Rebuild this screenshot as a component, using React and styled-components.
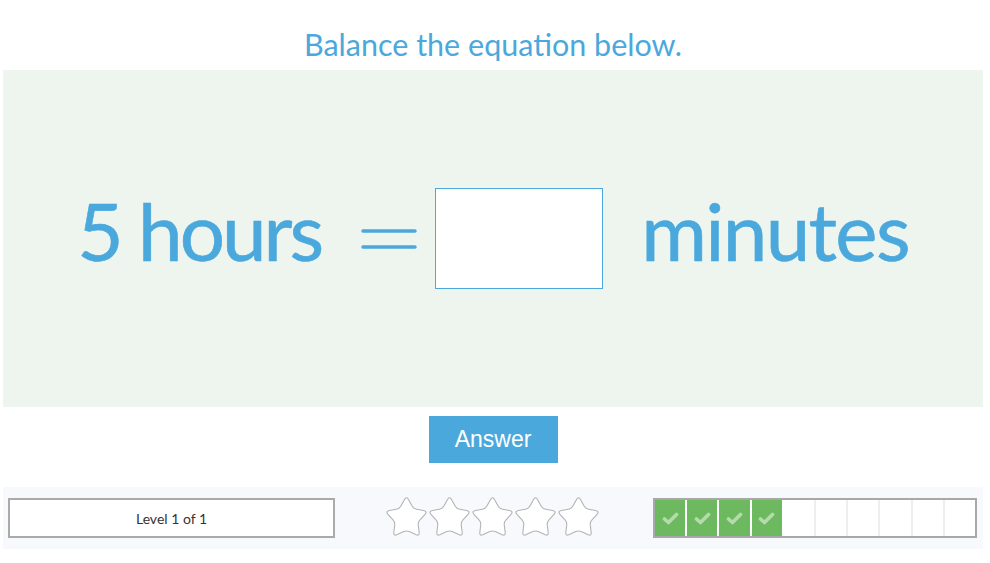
import React from "react";
import styled, { createGlobalStyle } from "styled-components";

const GlobalStyle = createGlobalStyle`
	html, body {
		margin: 0;
		padding: 0;
		background: white;
		font-family: Lato, "Noto Sans", sans-serif;
	}
`;

const BLUE = "#4aa8dc";

const Page = styled.div`
	width: 980px;
	margin-left: 3px;
	display: flex;
	flex-direction: column;
	align-items: stretch;
`;

const Title = styled.h1`
	margin: 0;
	height: 70px;
	display: flex;
	align-items: flex-end;
	justify-content: center;
	padding-bottom: 8px;
	box-sizing: border-box;
	font-size: 30.5px;
	font-weight: 400;
	color: ${BLUE};
`;

const Panel = styled.div`
	height: 337px;
	background: #eef5ef;
	display: flex;
	align-items: center;
	justify-content: center;
`;

const Term = styled.span`
	font-size: 80px;
	color: ${BLUE};
	line-height: 1;
	letter-spacing: ${({ tight }) => tight};
	margin: ${({ gap }) => gap};
	padding-bottom: 18px;
	-webkit-text-stroke: 0.6px ${BLUE};
`;

const AnswerBox = styled.input`
	width: 168px;
	height: 101px;
	box-sizing: border-box;
	border: 1px solid ${BLUE};
	background: white;
	outline: none;
	margin: 0;
`;

const Equals = styled.svg`
	display: block;
	margin-right: 18px;
`;

const ButtonRow = styled.div`
	display: flex;
	justify-content: center;
	padding: 9px 0 24px;
`;

const AnswerButton = styled.button`
	width: 129px;
	height: 47px;
	border: none;
	background: ${BLUE};
	color: white;
	font-family: "Liberation Sans", Arial, sans-serif;
	font-size: 23px;
	cursor: pointer;
`;

const StatusBar = styled.div`
	height: 62px;
	background: #f7f9fd;
	display: flex;
	align-items: center;
	justify-content: space-between;
	padding: 0 6px 0 5px;
	box-sizing: border-box;
`;

const LevelBox = styled.div`
	width: 327px;
	height: 40px;
	box-sizing: border-box;
	border: 2px solid #aaaaaa;
	background: white;
	display: flex;
	align-items: center;
	justify-content: center;
	font-size: 14px;
	color: #333;
`;

const Stars = styled.div`
	display: flex;
	margin-left: -4px;
	margin-top: -2px;
`;

const Progress = styled.div`
	width: 324px;
	height: 40px;
	box-sizing: border-box;
	border: 2px solid #a8a8a8;
	background: white;
	display: flex;
`;

const Cell = styled.div`
	flex: 1;
	display: flex;
	align-items: center;
	justify-content: center;
	background: ${({ done }) => (done ? "#6cb95f" : "white")};
	border-right: 2px solid ${({ done }) => (done ? "white" : "#eeeeee")};
	&:last-child {
		border-right: none;
	}
`;

// rounded five-point star outline
function starPath(cx, cy, ro, ri, t) {
	const pts = [];
	for (let i = 0; i < 10; i++) {
		const r = i % 2 === 0 ? ro : ri;
		const a = -Math.PI / 2 + (i * Math.PI) / 5;
		pts.push([cx + r * Math.cos(a), cy + r * Math.sin(a)]);
	}
	const lerp = (p, q, k) => [p[0] + (q[0] - p[0]) * k, p[1] + (q[1] - p[1]) * k];
	let d = "";
	pts.forEach((p, i) => {
		const prev = pts[(i + 9) % 10];
		const next = pts[(i + 1) % 10];
		const k = i % 2 === 0 ? t : t * 0.7;
		const a = lerp(p, prev, k);
		const b = lerp(p, next, k);
		d += `${i === 0 ? "M" : "L"}${a[0].toFixed(2)},${a[1].toFixed(2)} `;
		d += `Q${p[0].toFixed(2)},${p[1].toFixed(2)} ${b[0].toFixed(2)},${b[1].toFixed(2)} `;
	});
	return d + "Z";
}

const STAR = starPath(21.5, 23.3, 22.4, 12, 0.3);

function Star() {
	return (
		<svg width="43" height="44" viewBox="0 0 43 44">
			<path d={STAR} fill="white" stroke="#b4b4b4" strokeWidth="1.1" />
		</svg>
	);
}

function Check() {
	return (
		<svg width="17" height="13" viewBox="0 0 17 13">
			<path
				d="M2.5 7 L6.5 10.5 L14.5 2.5"
				fill="none"
				stroke="#b3dcaa"
				strokeWidth="3.6"
				strokeLinecap="round"
				strokeLinejoin="round"
			/>
		</svg>
	);
}

export default function App() {
	const cells = Array.from({ length: 10 }, (_, i) => i < 4);
	return (
		<>
			<GlobalStyle />
			<Page>
				<Title>Balance the equation below.</Title>
				<Panel>
					<Term gap="0 40px 0 0" tight="-3px">5 hours</Term>
					<Equals width="56" height="22" viewBox="0 0 56 22">
						<line x1="2" y1="3" x2="54" y2="3" stroke={BLUE} strokeWidth="3.5" strokeLinecap="round" />
						<line x1="2" y1="19" x2="54" y2="19" stroke={BLUE} strokeWidth="3.5" strokeLinecap="round" />
					</Equals>
					<AnswerBox type="text" />
					<Term gap="0 0 0 38px" tight="-1.7px">minutes</Term>
				</Panel>
				<ButtonRow>
					<AnswerButton>Answer</AnswerButton>
				</ButtonRow>
				<StatusBar>
					<LevelBox>Level 1 of 1</LevelBox>
					<Stars>
						{[0, 1, 2, 3, 4].map((i) => (
							<Star key={i} />
						))}
					</Stars>
					<Progress>
						{cells.map((done, i) => (
							<Cell key={i} done={done}>
								{done && <Check />}
							</Cell>
						))}
					</Progress>
				</StatusBar>
			</Page>
		</>
	);
}
